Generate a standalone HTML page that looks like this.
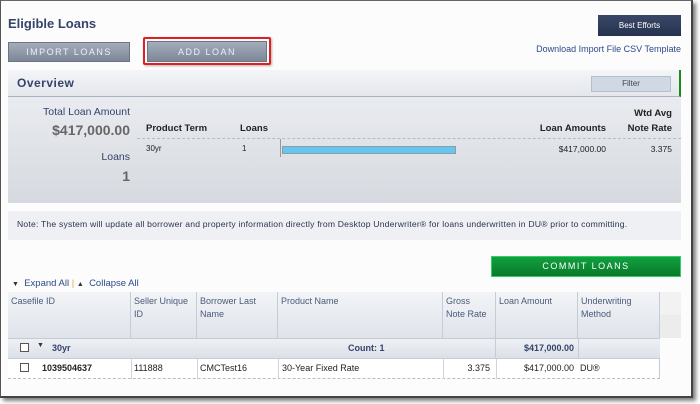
<!DOCTYPE html>
<html><head><style>
*{margin:0;padding:0;box-sizing:border-box}
body{width:700px;height:404px;background:#fff;font-family:"Liberation Sans",Arial,sans-serif;position:relative;overflow:hidden}
.a{position:absolute;white-space:nowrap}
.frame{position:absolute;left:0;top:0;width:693px;height:398px;border:2px solid #444;border-top:1px solid #666;border-left:1px solid #555;background:#fcfcfc;box-shadow:3px 3px 4px rgba(0,0,0,.5)}
.btn{position:absolute;background:linear-gradient(#a4adb9,#7c8797);color:#eef;font-size:9px;letter-spacing:1.5px;text-align:center;border:1px solid #6b7585}
.bh{color:#222;font-weight:bold;font-size:9.5px}
.col{position:absolute;top:292px;height:46px;border-right:1px solid #c6ccd6;font-size:9px;color:#4a5a78;padding:3px 3px;line-height:13px;white-space:normal}
.d{font-size:9px;color:#222}
</style></head><body>
<div class="frame"></div>
<div class="a" style="left:8px;top:16px;font-size:13px;font-weight:bold;color:#34446a">Eligible Loans</div>
<div class="btn" style="left:8px;top:42px;width:122px;height:20px;line-height:19px">IMPORT LOANS</div>
<div style="position:absolute;left:143px;top:37px;width:128px;height:28px;border:2px solid #e02020;border-radius:2px;box-shadow:1px 1px 2px rgba(0,0,0,.3)"></div>
<div class="btn" style="left:147px;top:41px;width:120px;height:21px;line-height:20px">ADD LOAN</div>
<div class="a" style="left:598px;top:15px;width:83px;height:21px;background:linear-gradient(#3a4868,#26324e);color:#fff;font-size:8px;text-align:center;line-height:21px">Best Efforts</div>
<div class="a" style="right:19px;top:44px;font-size:9px;color:#2d4a8a">Download Import File CSV Template</div>
<!-- overview -->
<div class="a" style="left:8px;top:70px;width:673px;height:133px;background:linear-gradient(#eef0f4,#d6d9df)"></div>
<div class="a" style="left:8px;top:70px;width:673px;height:27px;background:linear-gradient(#f4f5f8,#e4e7ec);border-bottom:1px solid #a9b3c2;border-right:2px solid #1a8a1a"></div>
<div class="a" style="left:17px;top:76px;font-size:12px;font-weight:bold;color:#34446a;letter-spacing:.5px">Overview</div>
<div class="a" style="left:591px;top:76px;width:80px;height:16px;background:#cfd8e3;border:1px solid #b5bfcc;font-size:8px;color:#445;text-align:center;line-height:14px">Filter</div>
<div class="a" style="right:570px;top:106px;font-size:10.5px;color:#34446a">Total Loan Amount</div>
<div class="a" style="right:570px;top:122px;font-size:14px;font-weight:bold;color:#666">$417,000.00</div>
<div class="a" style="right:570px;top:151px;font-size:10.5px;color:#34446a">Loans</div>
<div class="a" style="right:570px;top:168px;font-size:14px;font-weight:bold;color:#666">1</div>
<div class="a bh" style="left:146px;top:123px">Product Term</div>
<div class="a bh" style="left:240px;top:123px">Loans</div>
<div class="a bh" style="right:94px;top:123px">Loan Amounts</div>
<div class="a bh" style="right:28px;top:108px">Wtd Avg</div>
<div class="a bh" style="right:28px;top:123px">Note Rate</div>
<div class="a" style="left:137px;top:138px;width:544px;border-top:1px dashed #b8bcc4"></div>
<div class="a" style="left:146px;top:144px;font-size:8px;color:#222">30yr</div>
<div class="a" style="left:242px;top:144px;font-size:8px;color:#222">1</div>
<div class="a" style="left:280px;top:139px;width:1px;height:18px;background:#999"></div>
<div class="a" style="left:282px;top:146px;width:174px;height:8px;background:#60c8f2;border:1px solid #999"></div>
<div class="a" style="right:94px;top:144px;font-size:8.5px;color:#222">$417,000.00</div>
<div class="a" style="right:28px;top:144px;font-size:8.5px;color:#222">3.375</div>
<!-- note -->
<div class="a" style="left:8px;top:211px;width:673px;height:29px;background:#eff0f3"></div>
<div class="a" style="left:17px;top:219px;font-size:8.6px;letter-spacing:.2px;color:#2a3550">Note: The system will update all borrower and property information directly from Desktop Underwriter® for loans underwritten in DU® prior to committing.</div>
<div class="a" style="left:491px;top:256px;width:190px;height:21px;background:linear-gradient(#12a040,#087a2a);border:1px solid #3c6;color:#fff;font-size:9px;letter-spacing:1.5px;text-align:center;line-height:19px">COMMIT LOANS</div>
<div class="a" style="left:12px;top:278px;font-size:9.5px;color:#2d4a8a"><span style="font-size:7px;color:#333">▼</span>&nbsp; Expand All <span style="color:#f0a040">|</span> <span style="font-size:7px;color:#333">▲</span>&nbsp; Collapse All</div>
<!-- table -->
<div class="a" style="left:8px;top:292px;width:673px;height:46px;background:linear-gradient(#f2f4f7,#dfe3ea)"></div>
<div class="a" style="left:660px;top:292px;width:21px;height:46px;background:linear-gradient(#f2f2f2 50%,#ececec 50%)"></div>
<div class="col" style="left:8px;width:123px">Casefile ID</div>
<div class="col" style="left:131px;width:66px">Seller Unique ID</div>
<div class="col" style="left:197px;width:81px">Borrower Last Name</div>
<div class="col" style="left:278px;width:165px">Product Name</div>
<div class="col" style="left:443px;width:53px">Gross<br>Note Rate</div>
<div class="col" style="left:496px;width:82px">Loan Amount</div>
<div class="col" style="left:578px;width:82px">Underwriting Method</div>
<div class="a" style="left:8px;top:338px;width:652px;height:21px;background:linear-gradient(#eef0f4,#dce1e8);border-top:1px solid #c6ccd6;border-bottom:1px solid #c6ccd6"></div>
<div class="a" style="left:495px;top:338px;width:1px;height:21px;background:#c6ccd6"></div>
<div class="a" style="left:578px;top:338px;width:1px;height:21px;background:#c6ccd6"></div>
<div class="a" style="left:20px;top:343px;width:9px;height:9px;border:1px solid #555;background:#fff"></div>
<div class="a" style="left:37px;top:342px;font-size:7px;color:#333">▼</div>
<div class="a" style="left:52px;top:343px;font-size:9px;font-weight:bold;color:#34446a">30yr</div>
<div class="a" style="left:348px;top:343px;font-size:9px;font-weight:bold;color:#34446a">Count: 1</div>
<div class="a" style="right:126px;top:343px;font-size:9px;font-weight:bold;color:#34446a">$417,000.00</div>
<div class="a" style="left:8px;top:359px;width:652px;height:20px;background:#fff;border-bottom:1px dashed #bbb;border-right:1px solid #c6ccd6"></div>
<div class="a" style="left:131px;top:359px;width:1px;height:20px;background:#d0d4da"></div>
<div class="a" style="left:197px;top:359px;width:1px;height:20px;background:#d0d4da"></div>
<div class="a" style="left:278px;top:359px;width:1px;height:20px;background:#d0d4da"></div>
<div class="a" style="left:443px;top:359px;width:1px;height:20px;background:#d0d4da"></div>
<div class="a" style="left:496px;top:359px;width:1px;height:20px;background:#d0d4da"></div>
<div class="a" style="left:20px;top:363px;width:9px;height:9px;border:1px solid #555;background:#fff"></div>
<div class="a" style="left:42px;top:363px;font-size:9px;font-weight:bold;color:#222">1039504637</div>
<div class="a d" style="left:134px;top:363px">111888</div>
<div class="a d" style="left:200px;top:363px">CMCTest16</div>
<div class="a d" style="left:282px;top:363px">30-Year Fixed Rate</div>
<div class="a d" style="right:210px;top:363px">3.375</div>
<div class="a d" style="right:126px;top:363px">$417,000.00</div>
<div class="a d" style="left:580px;top:363px">DU®</div>
</body></html>
